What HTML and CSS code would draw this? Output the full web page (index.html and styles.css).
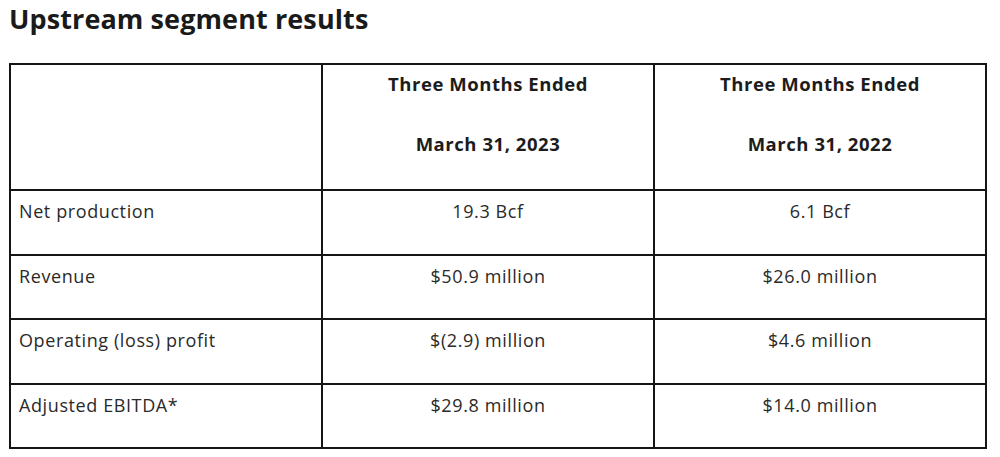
FILE: index.html
```html
<!DOCTYPE html>
<html>
<head>
<meta charset="utf-8">
<link rel="stylesheet" href="styles.css">
</head>
<body>
<div class="page">
  <h1 class="title">Upstream segment results</h1>
  <table class="results">
    <colgroup>
      <col class="c-label">
      <col class="c-val">
      <col class="c-val">
    </colgroup>
    <thead>
      <tr>
        <th></th>
        <th><p class="h1">Three Months Ended</p><p class="h2">March 31, 2023</p></th>
        <th><p class="h1">Three Months Ended</p><p class="h2">March 31, 2022</p></th>
      </tr>
    </thead>
    <tbody>
      <tr class="r-a"><td class="label">Net production</td><td>19.3 Bcf</td><td>6.1 Bcf</td></tr>
      <tr class="r-b"><td class="label">Revenue</td><td>$50.9 million</td><td>$26.0 million</td></tr>
      <tr class="r-a"><td class="label">Operating (loss) profit</td><td>$(2.9) million</td><td>$4.6 million</td></tr>
      <tr class="r-b"><td class="label">Adjusted EBITDA*</td><td>$29.8 million</td><td>$14.0 million</td></tr>
    </tbody>
  </table>
</div>
</body>
</html>
```

FILE: styles.css
```css
html, body {
  margin: 0;
  padding: 0;
  background: #ffffff;
}
.page {
  padding: 0 0 0 9px;
  font-family: "Open Sans", "Noto Sans", sans-serif;
  color: #222;
}
.title {
  margin: 0;
  font-size: 27px;
  font-weight: 700;
  line-height: 37px;
  color: #1a1a1a;
  letter-spacing: 0.1px;
}
.results {
  margin-top: 26px;
  border-collapse: collapse;
  width: 976px;
  table-layout: fixed;
}
.c-label { width: 312px; }
.c-val { width: 332px; }
.results th, .results td {
  border: 2px solid #151515;
  vertical-align: top;
}
.results th {
  height: 124px;
  padding: 0;
  text-align: center;
  font-weight: 700;
  font-size: 18.5px;
  letter-spacing: 0.55px;
  color: #1c1c1c;
}
.results th p {
  margin: 0;
  line-height: 24px;
}
.results th .h1 { margin-top: 7px; }
.results th .h2 { margin-top: 36px; }
.results td {
  box-sizing: border-box;
  padding: 8px 8px 0 8px;
  font-size: 18px;
  letter-spacing: 0.6px;
  line-height: 24px;
  text-align: center;
  color: #2a2a2a;
}
.results tr.r-a td { height: 65px; }
.results tr.r-b td { height: 64px; }
.results td.label {
  text-align: left;
}
```
